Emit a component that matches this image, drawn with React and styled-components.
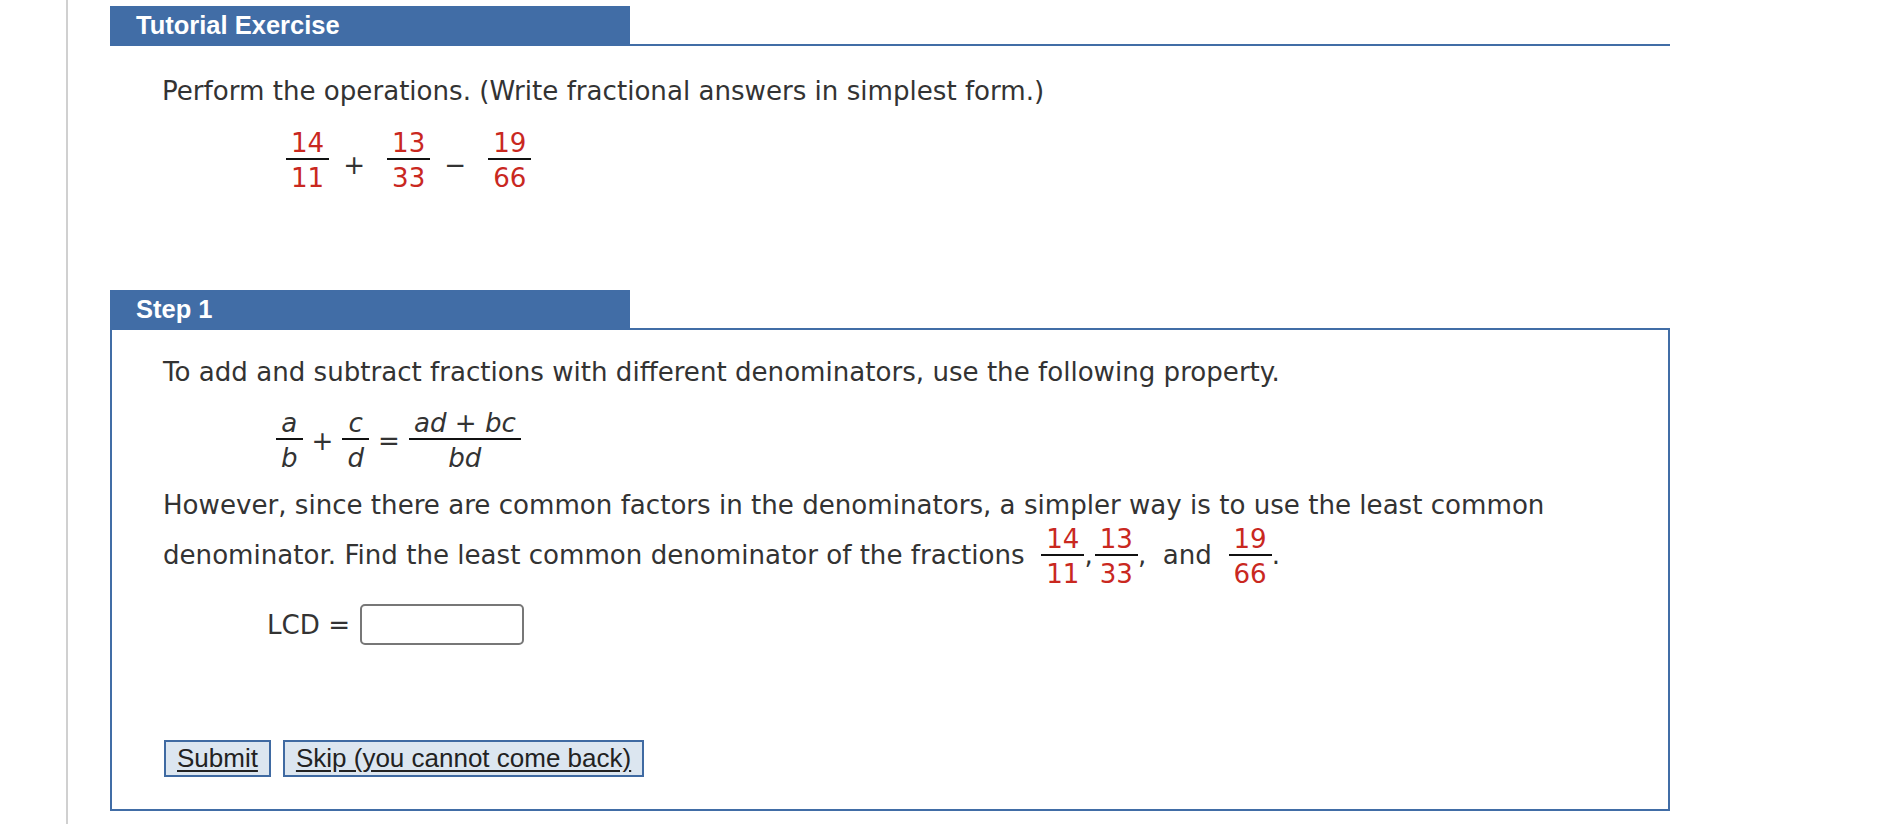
import React from 'react';
import styled, { createGlobalStyle } from 'styled-components';

const BLUE = '#416da6';
const RED = '#c9281f';
const INK = '#333';

const GlobalStyle = createGlobalStyle`
  body {
    margin: 0;
    background: #fff;
    font-family: "DejaVu Sans", Verdana, sans-serif;
    font-size: 26.1px;
    color: ${INK};
  }
`;

// page frame with the grey rule on the left
const Page = styled.div`
  padding-left: 66px;
  min-height: 824px;
  box-sizing: border-box;
`;

const Column = styled.div`
  min-height: 824px;
  box-sizing: border-box;
  border-left: 2px solid #d0d0d0;
  padding: 6px 0 0 42px;
`;

// blue tab headers
const SectionHeader = styled.div`
  width: 1560px;
  display: flex;
  border-bottom: 2px solid ${BLUE};
`;

const HeaderTab = styled.div`
  width: 520px;
  height: 38px;
  box-sizing: border-box;
  padding-left: 26px;
  background: ${BLUE};
  color: #fff;
  font-family: "Liberation Sans", Arial, sans-serif;
  font-weight: bold;
  font-size: 25.5px;
  line-height: 38px;
`;

const Intro = styled.div`
  padding-left: 52px;
`;

const Line = styled.div`
  line-height: 26px;
  margin-top: ${p => p.$top || 0}px;
  white-space: nowrap;
`;

const Formula = styled.div`
  display: flex;
  align-items: center;
  margin-top: ${p => p.$top}px;
  margin-left: ${p => p.$left}px;
`;

const Op = styled.span`
  line-height: 26px;
  padding: 0 ${p => p.$right}px 0 ${p => p.$left}px;
  margin-top: ${p => p.$shift || 0}px;
`;

// stacked fraction
const Frac = styled.span`
  display: inline-flex;
  flex-direction: column;
  vertical-align: middle;
  text-align: center;
  color: ${p => (p.$red ? RED : INK)};
  font-style: ${p => (p.$italic ? 'italic' : 'normal')};
  margin-left: ${p => p.$ml || 0}px;
`;

const Num = styled.span`
  display: block;
  line-height: 26px;
  padding: 0 5px 2px;
  border-bottom: 2px solid #111;
`;

const Den = styled.span`
  display: block;
  line-height: 26px;
  padding: 5px 5px 0;
`;

const StepSection = styled.div`
  margin-top: 99px;
`;

const StepBody = styled.div`
  width: 1560px;
  box-sizing: border-box;
  border: 2px solid ${BLUE};
  border-top: none;
  padding: 29px 0 32px 51px;
`;

const AnswerRow = styled.div`
  display: flex;
  align-items: center;
  margin: 17px 0 0 104px;
  line-height: 26px;
`;

const AnswerInput = styled.input`
  width: 164px;
  height: 41px;
  box-sizing: border-box;
  margin-left: 10px;
  border: 2px solid #777;
  border-radius: 5px;
  background: #fff;
  font: inherit;
  padding: 0 6px;
`;

const Actions = styled.div`
  display: flex;
  gap: 12px;
  margin: 95px 0 0 1px;
`;

const ActionButton = styled.button`
  height: 37px;
  box-sizing: border-box;
  padding: 0 11px;
  border: 2px solid #3f6aa2;
  border-radius: 0;
  background: #dce6f0;
  color: #222;
  font-family: "Liberation Sans", Arial, sans-serif;
  font-size: 26px;
  line-height: 33px;
  text-decoration: underline;
  text-underline-offset: 3px;
  cursor: pointer;
`;

const Fraction = ({ n, d, red, italic, ml }) => (
  <Frac $red={red} $italic={italic} $ml={ml}>
    <Num>{n}</Num>
    <Den>{d}</Den>
  </Frac>
);

export default function App() {
  return (
    <>
      <GlobalStyle />
      <Page>
        <Column>
          <SectionHeader>
            <HeaderTab>Tutorial Exercise</HeaderTab>
          </SectionHeader>

          <Intro>
            <Line $top={32}>Perform the operations. (Write fractional answers in simplest form.)</Line>
            <Formula $top={26} $left={124}>
              <Fraction n="14" d="11" red />
              <Op $left={14} $right={22} $shift={9}>+</Op>
              <Fraction n="13" d="33" red />
              <Op $left={14} $right={22} $shift={9}>−</Op>
              <Fraction n="19" d="66" red />
            </Formula>
          </Intro>

          <StepSection>
            <SectionHeader>
              <HeaderTab>Step 1</HeaderTab>
            </SectionHeader>
            <StepBody>
              <Line>To add and subtract fractions with different denominators, use the following property.</Line>
              <Formula $top={25} $left={113}>
                <Fraction n="a" d="b" italic />
                <Op $left={9} $right={9}>+</Op>
                <Fraction n="c" d="d" italic />
                <Op $left={9} $right={9}>=</Op>
                <Fraction n="ad + bc" d="bd" italic />
              </Formula>
              <Line $top={21}>
                However, since there are common factors in the denominators, a simpler way is to use the least common
              </Line>
              <Line $top={8}>
                {'denominator. Find the least common denominator of the fractions\u00a0 '}
                <Fraction n="14" d="11" red />
                ,
                <Fraction n="13" d="33" red ml={2} />
                {',\u00a0 and \u00a0'}
                <Fraction n="19" d="66" red />
                .
              </Line>
              <AnswerRow>
                <span>LCD =</span>
                <AnswerInput type="text" aria-label="LCD" />
              </AnswerRow>
              <Actions>
                <ActionButton type="button">Submit</ActionButton>
                <ActionButton type="button">Skip (you cannot come back)</ActionButton>
              </Actions>
            </StepBody>
          </StepSection>
        </Column>
      </Page>
    </>
  );
}
